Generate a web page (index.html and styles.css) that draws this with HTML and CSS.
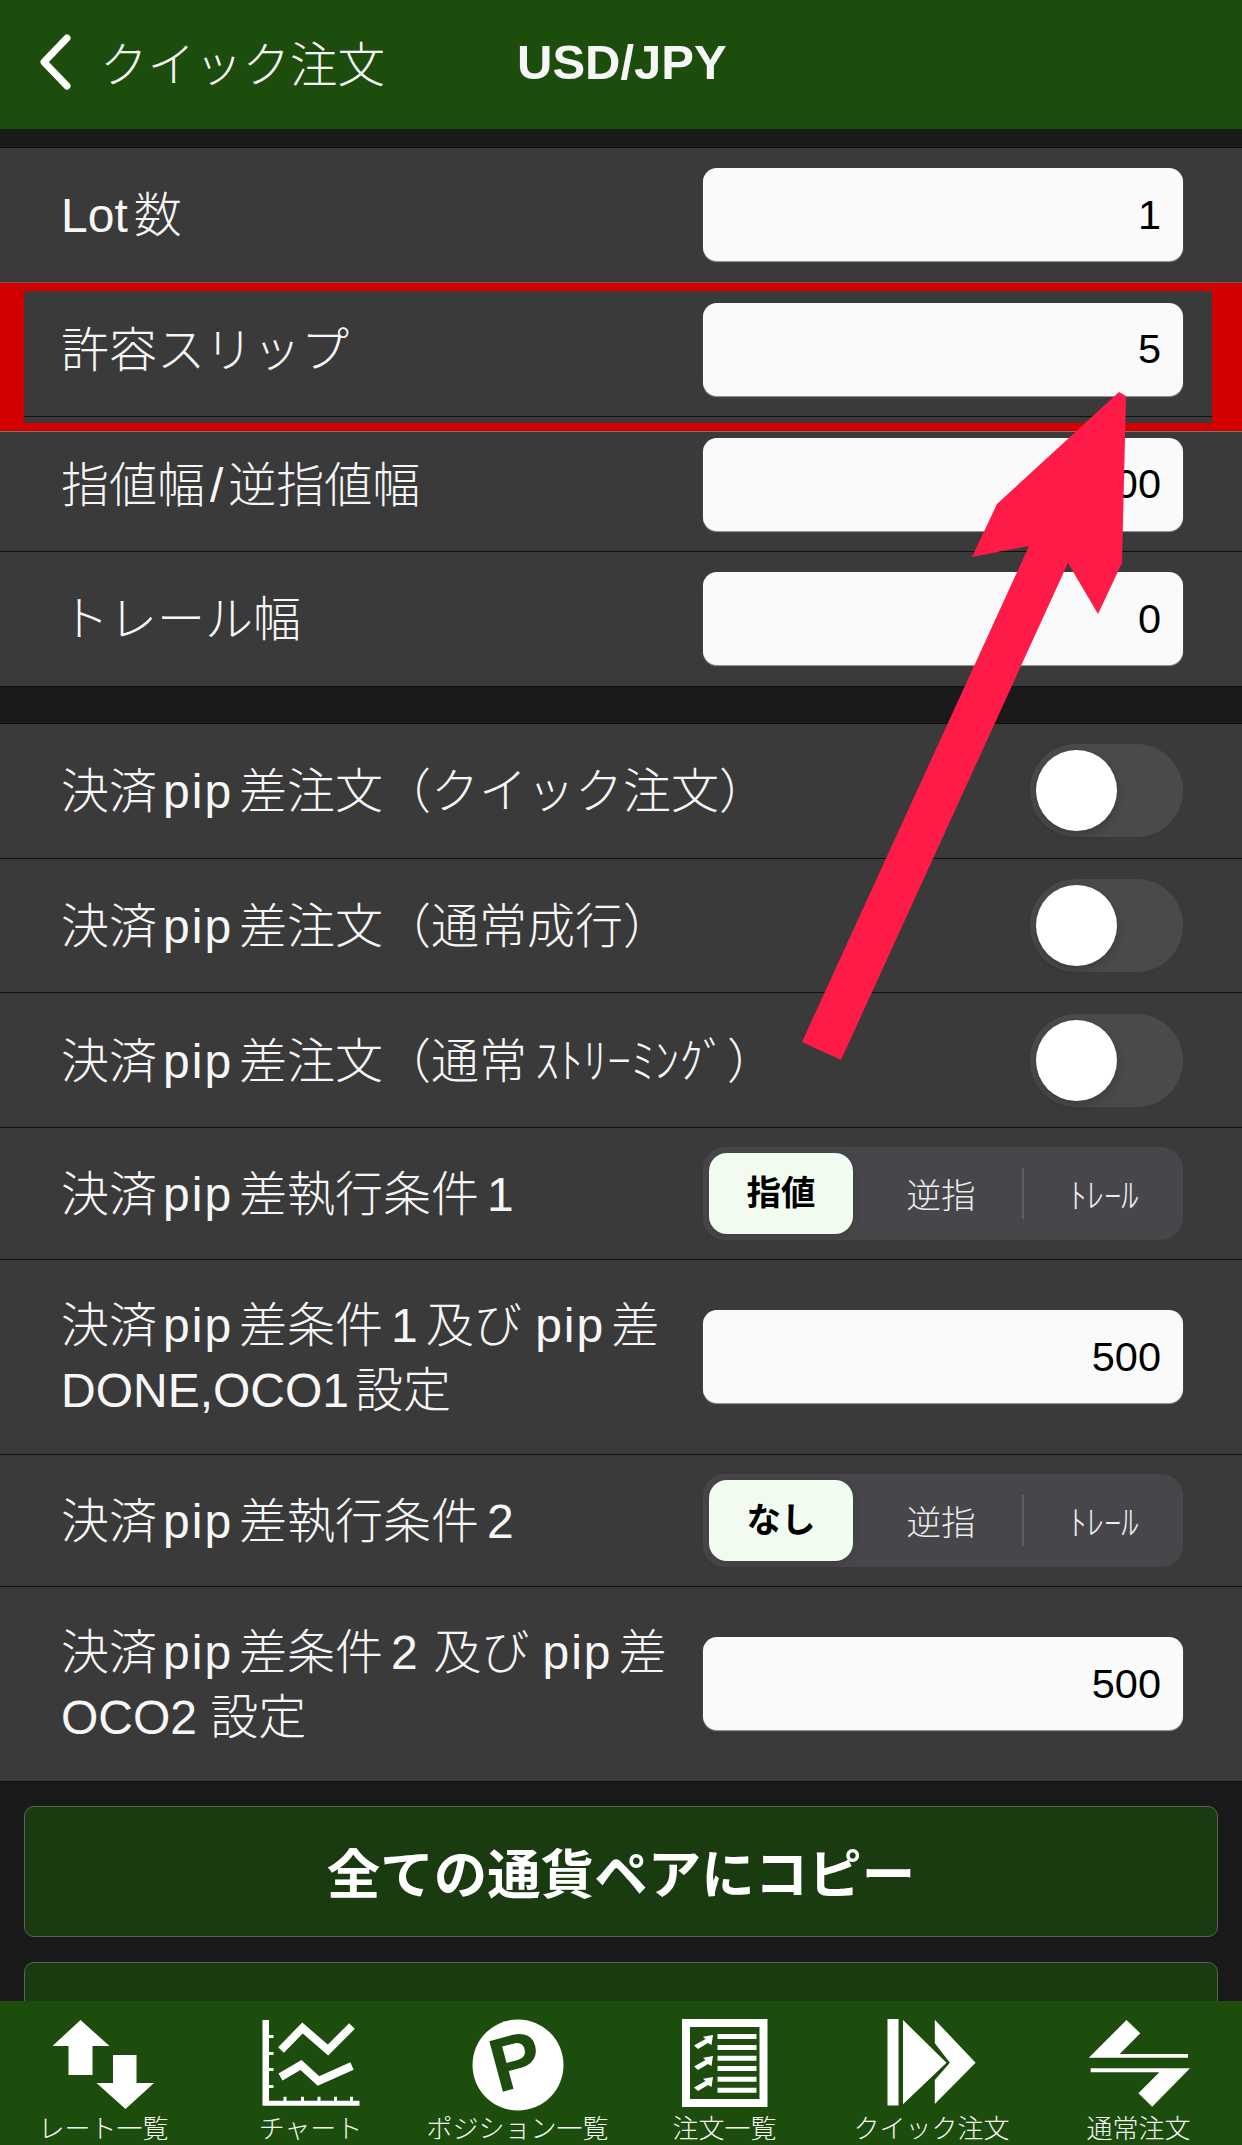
FILE: index.html
```html
<!DOCTYPE html>
<html lang="ja">
<head>
    <meta charset="UTF-8">
    <meta name="viewport" content="width=device-width, initial-scale=1.0">
    <title>クイック注文</title>
    <link rel="stylesheet" href="styles.css">
</head>
<body>
    <div class="app">
        <header class="top-bar">
            <svg class="back" viewBox="0 0 34 56" width="34" height="56"><path d="M29 4 L6 28 L29 52" fill="none" stroke="#fff" stroke-width="7" stroke-linecap="round" stroke-linejoin="round"/></svg>
            <span class="back-label">クイック注文</span>
            <span class="pair">USD/JPY</span>
        </header>

        <main class="content">
            <section class="group group-first">
                <div class="row"><span class="label">Lot数</span><input class="field" type="text" value="1" readonly></div>
                <div class="row"><span class="label">許容スリップ</span><input class="field" type="text" value="5" readonly></div>
                <div class="row"><span class="label">指値幅<span class="slash">/</span>逆指値幅</span><input class="field" type="text" value="100" readonly></div>
                <div class="row"><span class="label">トレール幅</span><input class="field" type="text" value="0" readonly></div>
            </section>

            <section class="group">
                <div class="row"><span class="label">決済<span class="pip">pip</span>差注文（クイック注文）</span><div class="toggle"><div class="knob"></div></div></div>
                <div class="row"><span class="label">決済<span class="pip">pip</span>差注文（通常成行）</span><div class="toggle"><div class="knob"></div></div></div>
                <div class="row"><span class="label">決済<span class="pip">pip</span>差注文（通常<span class="half">ｽﾄﾘｰﾐﾝｸﾞ</span>）</span><div class="toggle"><div class="knob"></div></div></div>
                <div class="row row-seg">
                    <span class="label">決済<span class="pip">pip</span>差執行条件<span class="num">1</span></span>
                    <div class="segment">
                        <div class="seg-on">指値</div>
                        <div class="seg-mid">逆指</div>
                        <div class="seg-line"></div>
                        <div class="seg-end">ﾄﾚｰﾙ</div>
                    </div>
                </div>
                <div class="row row-tall"><span class="label">決済<span class="pip">pip</span>差条件<span class="num">1</span>及び <span class="pip">pip</span>差<br>DONE,OCO1設定</span><input class="field" type="text" value="500" readonly></div>
                <div class="row row-seg">
                    <span class="label">決済<span class="pip">pip</span>差執行条件<span class="num">2</span></span>
                    <div class="segment">
                        <div class="seg-on">なし</div>
                        <div class="seg-mid">逆指</div>
                        <div class="seg-line"></div>
                        <div class="seg-end">ﾄﾚｰﾙ</div>
                    </div>
                </div>
                <div class="row row-tall"><span class="label">決済<span class="pip">pip</span>差条件<span class="num">2</span> 及び <span class="pip">pip</span>差<br>OCO2 設定</span><input class="field" type="text" value="500" readonly></div>
            </section>

            <div class="actions">
                <button class="big-button">全ての通貨ペアにコピー</button>
                <button class="big-button"></button>
            </div>
        </main>

        <nav class="tab-bar">
            <div class="tab">
                <svg viewBox="0 0 120 92" width="120" height="92"><path fill="#fff" d="M36.5 1 L65.5 27 H48.5 V56 H24.5 V27 H8.5 Z M69 36 H92.5 V64 H110 L81.5 90 L52.5 64 H69 Z"/></svg>
                <span>レート一覧</span>
            </div>
            <div class="tab">
                <svg viewBox="0 0 120 92" width="120" height="92">
                    <path fill="#fff" d="M11.5 1 H18 V81.7 H108.5 V86.7 H11.5 Z M18 16 H22.5 V19 H18 Z M18 33 H22.5 V36 H18 Z M18 49 H22.5 V52 H18 Z M18 66 H22.5 V69 H18 Z M32.5 77.7 H35.5 V82 H32.5 Z M50 77.7 H53 V82 H50 Z M66.5 77.7 H69.5 V82 H66.5 Z M83 77.7 H86 V82 H83 Z M99 77.7 H102 V82 H99 Z"/>
                    <path fill="none" stroke="#fff" stroke-width="8" d="M30 31 L51.5 9 L77 31 L101 7"/>
                    <path fill="none" stroke="#fff" stroke-width="8" d="M29.5 58 L50 46 L67.5 62 L101 47"/>
                </svg>
                <span>チャート</span>
            </div>
            <div class="tab">
                <svg viewBox="0 0 120 92" width="120" height="92">
                    <circle cx="60" cy="46" r="45.5" fill="#fff"/>
                    <text class="p-mark" x="40" y="74" transform="rotate(-15 40 74)">P</text>
                </svg>
                <span>ポジション一覧</span>
            </div>
            <div class="tab">
                <svg viewBox="0 0 120 92" width="120" height="92">
                    <rect x="21" y="4" width="77.5" height="80" fill="none" stroke="#fff" stroke-width="8"/>
                    <path fill="#fff" d="M52.5 15 H91.5 V20 H52.5 Z M52.5 26 H91.5 V31 H52.5 Z M52.5 36.700 H91.5 V41.700 H52.5 Z M52.5 47 H91.5 V52 H52.5 Z M52.5 57.700 H91.5 V62.700 H52.5 Z M52.5 68.700 H91.500 V73.700 H52.5 Z"/>
                    <path fill="#fff" d="M48 16 L38 17.700 L40.500 20 L29 26.500 L33 30 L43 24 L46.500 26 Z"/>
                    <path fill="#fff" transform="translate(0 21)" d="M48 16 L38 17.700 L40.500 20 L29 26.500 L33 30 L43 24 L46.500 26 Z"/>
                    <path fill="#fff" transform="translate(0 42)" d="M48 16 L38 17.700 L40.500 20 L29 26.500 L33 30 L43 24 L46.500 26 Z"/>
                </svg>
                <span>注文一覧</span>
            </div>
            <div class="tab">
                <svg viewBox="0 0 120 92" width="120" height="92"><path fill="#fff" d="M15.500 0 H26.500 V86.600 H15.500 Z M31 1 L74.500 43.700 L31 85.300 Z M62.800 0.700 L103.600 43.700 L62.800 85 V61 L77.900 43.700 L62.800 24.300 Z"/></svg>
                <span>クイック注文</span>
            </div>
            <div class="tab">
                <svg viewBox="0 0 120 92" width="120" height="92"><path fill="#fff" d="M47.500 1 L61.300 14.300 L40.700 35 H109 V38.700 H9.800 Z M11.700 49.300 H111 L73.200 87.700 L59.400 74.300 L80.400 53.300 H11.700 Z"/></svg>
                <span>通常注文</span>
            </div>
        </nav>

        <div class="red-frame"></div>
        <svg class="pointer" viewBox="0 0 1242 2145" width="1242" height="2145"><polygon fill="#fe1b48" points="1119,392 1126,396 1122,563 1098,614 1068,563 841,1060 802,1042 1029,546 972,557 997,504"/></svg>
    </div>
</body>
</html>
```

FILE: styles.css
```css
* {
    box-sizing: border-box;
}
body {
    margin: 0;
    background-color: #1a1a1a;
    font-family: "Liberation Sans", "Noto Sans CJK JP", sans-serif;
    color: #f6f6f6;
    text-autospace: normal;
}
.app {
    position: relative;
    width: 1242px;
    height: 2145px;
    display: flex;
    flex-direction: column;
    overflow: hidden;
}
.top-bar {
    height: 129px;
    flex: none;
    display: flex;
    align-items: center;
    padding: 0 0 6px 38px;
    background-color: #1c4d0c;
}
.back {
    flex: none;
    margin-right: 28px;
}
.back-label {
    flex: none;
    width: 284px;
    padding-bottom: 1px;
    font-size: 47.5px;
    font-weight: 300;
    white-space: nowrap;
}
.pair {
    margin-left: 133px;
    font-size: 49px;
    font-weight: 700;
}
.content {
    flex: 1;
    overflow: hidden;
}
.group {
    margin-top: 36.5px;
    border-top: 1px solid #111;
}
.group-first {
    margin-top: 18px;
}
.row {
    min-height: 134.67px;
    display: flex;
    align-items: center;
    justify-content: space-between;
    padding: 0 59px 0 61px;
    background-color: #3a3a3a;
    border-bottom: 1px solid #111;
}
.row-seg {
    min-height: 131.5px;
}
.row-tall {
    min-height: 195.5px;
}
.label {
    padding-top: 2px;
    font-size: 48px;
    font-weight: 300;
    line-height: 65px;
    white-space: nowrap;
}
.pip {
    letter-spacing: 2px;
}
.num {
    padding: 0 2px;
}
.half {
    margin-left: 8px;
}
.slash {
    padding: 0 5px;
}
.field {
    width: 480px;
    height: 93px;
    padding: 0 22px;
    border: none;
    outline: none;
    border-radius: 14px;
    background-color: #fafafa;
    box-shadow: 0 1px 1px #999;
    font-family: inherit;
    font-size: 41.5px;
    color: #000;
    text-align: right;
}
.toggle {
    width: 153px;
    height: 93px;
    padding: 6px;
    border-radius: 47px;
    background-color: #4a4a4c;
}
.knob {
    width: 81px;
    height: 81px;
    border-radius: 50%;
    background-color: #fff;
    box-shadow: 0 4px 10px rgba(0, 0, 0, 0.2);
}
.segment {
    width: 480px;
    height: 93px;
    display: flex;
    align-items: center;
    padding: 6px 5px 6px 6px;
    border-radius: 22px;
    background-color: #47474b;
    font-size: 34.5px;
    font-weight: 300;
    color: #ececec;
    text-align: center;
}
.seg-on {
    width: 144px;
    height: 81px;
    line-height: 81px;
    border-radius: 18px;
    background-color: #f1fbef;
    color: #000;
    font-weight: 700;
    box-shadow: 0 3px 8px rgba(0, 0, 0, 0.12);
}
.seg-mid {
    width: 169px;
    padding-left: 7px;
}
.seg-line {
    width: 2px;
    height: 51px;
    background-color: #5f5f63;
}
.seg-end {
    flex: 1;
    padding-left: 6px;
}
.actions {
    display: flex;
    flex-direction: column;
    gap: 25px;
    padding: 24px 24px 0;
}
.big-button {
    height: 131px;
    flex: none;
    padding: 0 0 3px;
    border: 1px solid #586458;
    border-radius: 10px;
    background-color: #1a3a10;
    color: #fff;
    font-family: inherit;
    font-size: 53.5px;
    font-weight: 700;
}
.tab-bar {
    height: 144px;
    flex: none;
    display: grid;
    grid-template-columns: repeat(6, 1fr);
    background-color: #1c4d0c;
}
.tab {
    display: flex;
    flex-direction: column;
    align-items: center;
    padding-top: 18px;
    font-size: 26px;
    font-weight: 300;
    line-height: 30px;
}
.tab svg {
    display: block;
    margin-bottom: 3px;
}
.p-mark {
    font-family: "Liberation Sans", sans-serif;
    font-size: 76px;
    font-weight: 700;
    fill: #1c4d0c;
}
.red-frame {
    position: absolute;
    top: 283px;
    left: 0;
    width: 1242px;
    height: 148px;
    border-style: solid;
    border-color: #d40000;
    border-width: 8px 30px 8px 24px;
    box-shadow: 0 1px 0 #777, 0 -1px 0 #666;
}
.pointer {
    position: absolute;
    top: 0;
    left: 0;
}
```
